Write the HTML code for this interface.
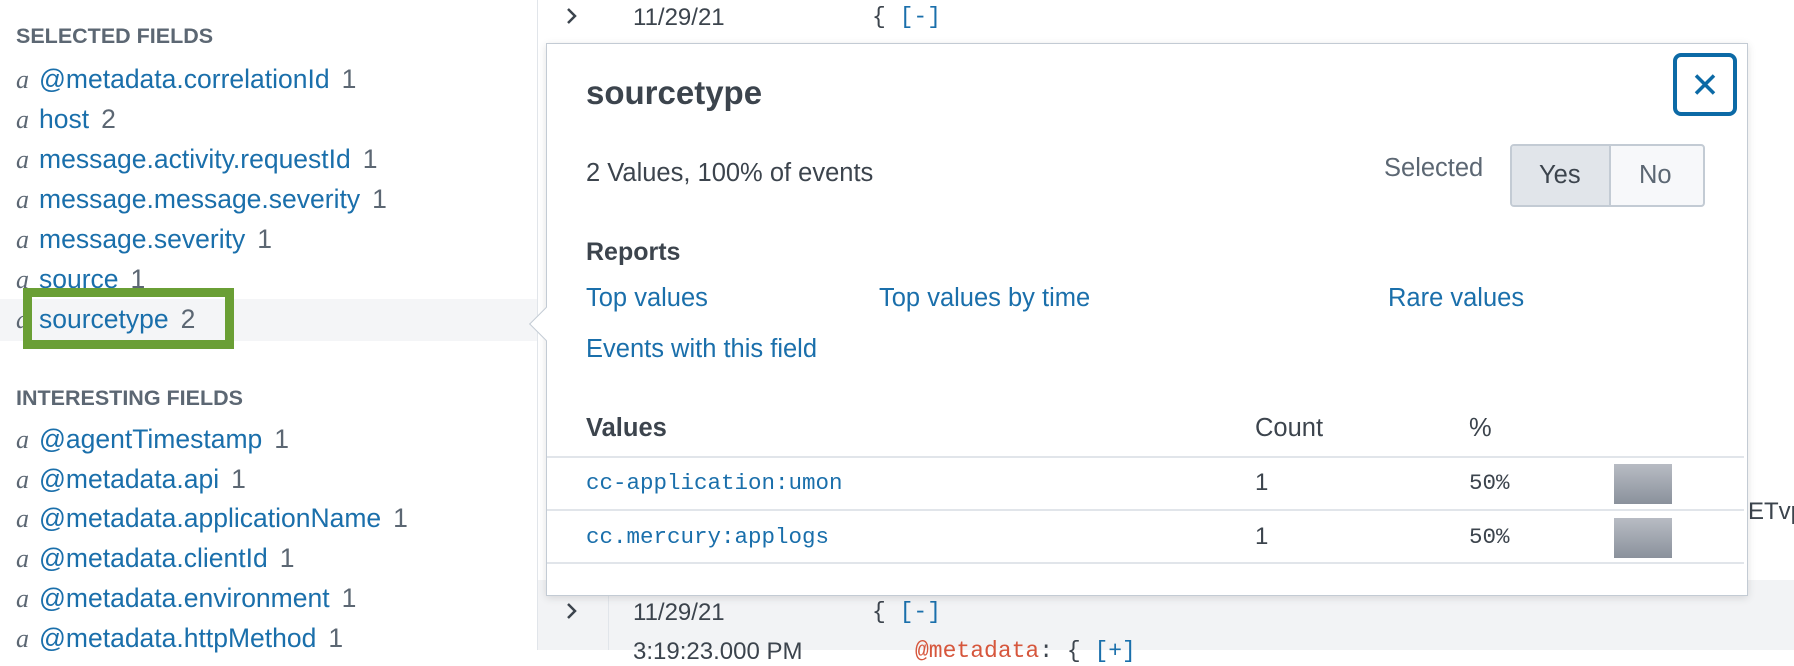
<!DOCTYPE html>
<html><head><meta charset="utf-8"><style>
*{margin:0;padding:0;box-sizing:border-box}
body{width:1794px;height:650px;overflow:hidden;background:#fff;font-family:"Liberation Sans",sans-serif;position:relative;color:#3c444d}
.abs{position:absolute;white-space:nowrap}
.hdr{font-size:21.5px;font-weight:bold;color:#5c6773;left:16px}
.row{left:16px;font-size:26.5px;color:#1a6fab;line-height:28px}
.row i{font-family:"Liberation Serif",serif;color:#5c6773;font-size:26px;margin-right:10px}
.row span{color:#5c6773;margin-left:12px}
.mono{font-family:"Liberation Mono",monospace}
.link{color:#1a6fab;font-size:25.5px}
</style></head><body>
<div class="abs" style="left:0;top:299px;width:538px;height:42px;background:#f4f5f7"></div>
<div class="abs" style="left:537px;top:0;width:1px;height:650px;background:#e1e5ea"></div>
<div class="abs hdr" style="top:24px">SELECTED FIELDS</div>
<div class="abs row" style="top:65px"><i>a</i>@metadata.correlationId<span>1</span></div>
<div class="abs row" style="top:105px"><i>a</i>host<span>2</span></div>
<div class="abs row" style="top:145px"><i>a</i>message.activity.requestId<span>1</span></div>
<div class="abs row" style="top:185px"><i>a</i>message.message.severity<span>1</span></div>
<div class="abs row" style="top:225px"><i>a</i>message.severity<span>1</span></div>
<div class="abs row" style="top:265px"><i>a</i>source<span>1</span></div>
<div class="abs row" style="top:305px"><i>a</i>sourcetype<span>2</span></div>
<div class="abs" style="left:23px;top:288px;width:211px;height:61px;border:9px solid #6a9f35"></div>
<div class="abs hdr" style="top:386px">INTERESTING FIELDS</div>
<div class="abs row" style="top:425px"><i>a</i>@agentTimestamp<span>1</span></div>
<div class="abs row" style="top:465px"><i>a</i>@metadata.api<span>1</span></div>
<div class="abs row" style="top:504px"><i>a</i>@metadata.applicationName<span>1</span></div>
<div class="abs row" style="top:544px"><i>a</i>@metadata.clientId<span>1</span></div>
<div class="abs row" style="top:584px"><i>a</i>@metadata.environment<span>1</span></div>
<div class="abs row" style="top:624px"><i>a</i>@metadata.httpMethod<span>1</span></div>
<div class="abs" style="left:538px;top:580px;width:1256px;height:70px;background:#f2f3f5"></div>
<div class="abs" style="left:608px;top:580px;width:1px;height:70px;background:#e1e5ea"></div>
<svg class="abs" style="left:564px;top:6px" width="16" height="20" viewBox="0 0 16 20"><path d="M4 3L11 10L4 17" fill="none" stroke="#3c444d" stroke-width="2.5"/></svg>
<div class="abs" style="left:633px;top:4px;font-size:24px">11/29/21</div>
<div class="abs mono" style="left:872px;top:4px;font-size:23px">{ <span style="color:#1a6fab">[-]</span></div>
<svg class="abs" style="left:564px;top:601px" width="16" height="20" viewBox="0 0 16 20"><path d="M4 3L11 10L4 17" fill="none" stroke="#3c444d" stroke-width="2.5"/></svg>
<div class="abs" style="left:633px;top:599px;font-size:24px">11/29/21</div>
<div class="abs mono" style="left:872px;top:599px;font-size:23px">{ <span style="color:#1a6fab">[-]</span></div>
<div class="abs" style="left:633px;top:638px;font-size:24px">3:19:23.000 PM</div>
<div class="abs mono" style="left:915px;top:638px;font-size:23px"><span style="color:#d6563c">@metadata</span>: { <span style="color:#1a6fab">[+]</span></div>
<div class="abs" style="left:1748px;top:498px;font-size:24px">ETvp</div>
<div class="abs" style="left:546px;top:43px;width:1202px;height:553px;background:#fff;border:1px solid #c3cbd4;box-shadow:0 2px 8px rgba(0,0,0,.12)"></div>
<div class="abs" style="left:534px;top:312px;width:24px;height:24px;background:#fff;border-left:1px solid #c3cbd4;border-bottom:1px solid #c3cbd4;transform:rotate(45deg)"></div>
<div class="abs" style="left:586px;top:74px;font-size:33px;font-weight:bold;color:#3c444d">sourcetype</div>
<div class="abs" style="left:1673px;top:53px;width:64px;height:63px;border:4px solid #0c6aa6;border-radius:8px">
<svg width="56" height="55" viewBox="0 0 56 55" style="position:absolute;left:0;top:0"><path d="M19 18.5L37 36.5M37 18.5L19 36.5" stroke="#0c6aa6" stroke-width="3.5"/></svg></div>
<div class="abs" style="left:586px;top:159px;font-size:25.5px">2 Values, 100% of events</div>
<div class="abs" style="left:1384px;top:154px;font-size:25.5px;color:#5c6773">Selected</div>
<div class="abs" style="left:1510px;top:144px;width:195px;height:63px;border:2px solid #c3cbd4;border-radius:4px;background:#f7f8fa;overflow:hidden">
<div style="position:absolute;left:0;top:0;width:99px;height:100%;background:#e1e5ea;border-right:2px solid #c3cbd4"></div>
<div style="position:absolute;left:27px;top:15px;font-size:25.5px">Yes</div>
<div style="position:absolute;left:127px;top:15px;font-size:25.5px;color:#5c6773">No</div></div>
<div class="abs" style="left:586px;top:238px;font-size:25px;font-weight:bold">Reports</div>
<div class="abs link" style="left:586px;top:284px">Top values</div>
<div class="abs link" style="left:879px;top:284px">Top values by time</div>
<div class="abs link" style="left:1388px;top:284px">Rare values</div>
<div class="abs link" style="left:586px;top:335px">Events with this field</div>
<div class="abs" style="left:586px;top:414px;font-size:25.5px;font-weight:bold">Values</div>
<div class="abs" style="left:1255px;top:414px;font-size:25.5px">Count</div>
<div class="abs" style="left:1469px;top:414px;font-size:25.5px">%</div>
<div class="abs" style="left:547px;top:456px;width:1197px;height:2px;background:#e1e5ea"></div>
<div class="abs" style="left:547px;top:509px;width:1197px;height:2px;background:#e1e5ea"></div>
<div class="abs" style="left:547px;top:562px;width:1197px;height:2px;background:#e1e5ea"></div>
<div class="abs mono" style="left:586px;top:470px;font-size:22.5px;color:#1a6fab">cc-application:umon</div>
<div class="abs" style="left:1255px;top:469px;font-size:24px">1</div>
<div class="abs mono" style="left:1469px;top:470px;font-size:22.5px">50%</div>
<div class="abs" style="left:1614px;top:464px;width:58px;height:40px;background:linear-gradient(#b8bcc4,#8a919c)"></div>
<div class="abs mono" style="left:586px;top:524px;font-size:22.5px;color:#1a6fab">cc.mercury:applogs</div>
<div class="abs" style="left:1255px;top:523px;font-size:24px">1</div>
<div class="abs mono" style="left:1469px;top:524px;font-size:22.5px">50%</div>
<div class="abs" style="left:1614px;top:518px;width:58px;height:40px;background:linear-gradient(#b8bcc4,#8a919c)"></div>
</body></html>
